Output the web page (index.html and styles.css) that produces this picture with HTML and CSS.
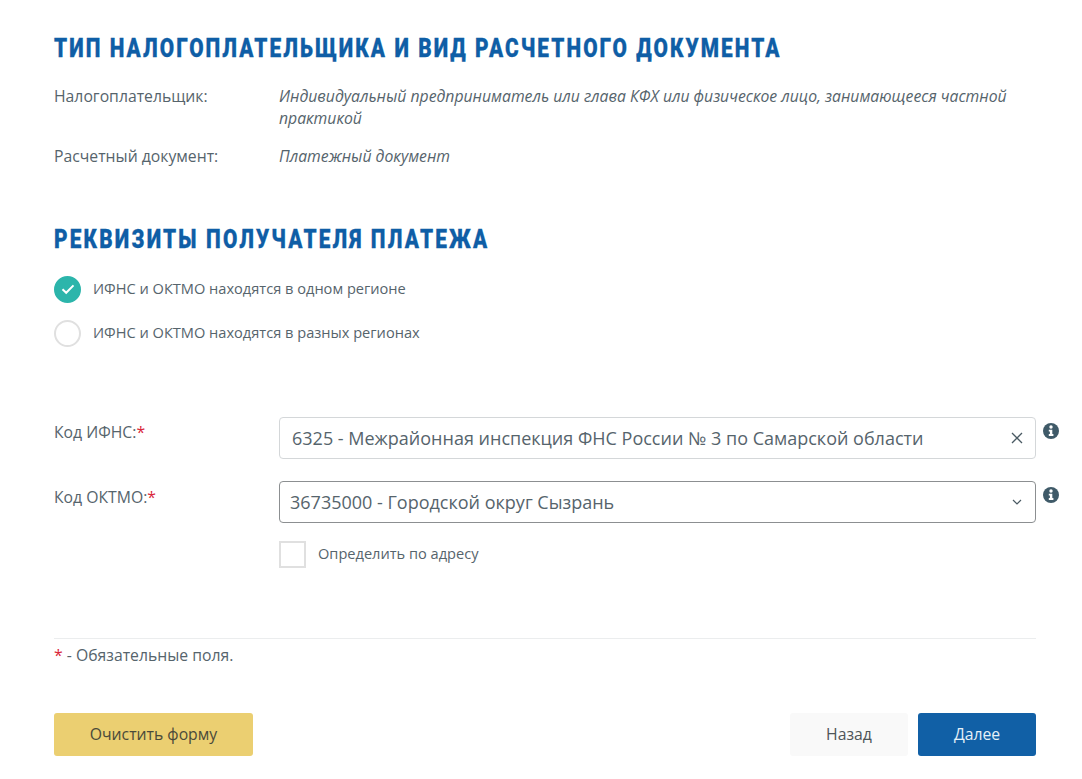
FILE: index.html
```html
<!DOCTYPE html>
<html>
  <head>
    <meta charset="utf-8">
    <link rel="stylesheet" href="styles.css">
  </head>
  <body>
    <div class="page">
      <h2 class="title">Тип налогоплательщика и вид расчетного документа</h2>

      <div class="info-row">
        <div class="info-label">Налогоплательщик:</div>
        <div class="info-value">Индивидуальный предприниматель или глава КФХ или физическое лицо, занимающееся частной практикой</div>
      </div>
      <div class="info-row">
        <div class="info-label">Расчетный документ:</div>
        <div class="info-value">Платежный документ</div>
      </div>

      <h2 class="title title-second">Реквизиты получателя платежа</h2>

      <div class="radio-row">
        <span class="radio radio-on">
          <svg width="14" height="12" viewBox="0 0 14 12"><path d="M1.5 6.2 L5.2 9.8 L12.5 2.4" fill="none" stroke="#fff" stroke-width="2"/></svg>
        </span>
        <span class="radio-text">ИФНС и ОКТМО находятся в одном регионе</span>
      </div>
      <div class="radio-row">
        <span class="radio"></span>
        <span class="radio-text">ИФНС и ОКТМО находятся в разных регионах</span>
      </div>

      <div class="field-row field-first">
        <div class="field-label">Код ИФНС:<span class="req">*</span></div>
        <div class="input">
          <span class="input-text">6325 - Межрайонная инспекция ФНС России № 3 по Самарской области</span>
          <svg class="input-icon" width="12" height="12" viewBox="0 0 12 12"><path d="M1 1 L11 11 M11 1 L1 11" fill="none" stroke="#4a5a63" stroke-width="1.3"/></svg>
        </div>
        <svg class="info-icon" width="16" height="16" viewBox="0 0 16 16">
          <circle cx="8" cy="8" r="8" fill="#3f5a68"/>
          <circle cx="8" cy="4" r="1.7" fill="#fff"/>
          <path d="M5.8 6.7 H9.3 V11 H10.4 V12.9 H5.8 V11 H6.9 V8.6 H5.8 Z" fill="#fff"/>
        </svg>
      </div>

      <div class="field-row field-second">
        <div class="field-label">Код ОКТМО:<span class="req">*</span></div>
        <div class="input input-active">
          <span class="input-text">36735000 - Городской округ Сызрань</span>
          <svg class="input-icon" width="10" height="6" viewBox="0 0 10 6"><path d="M1 1 L5 5 L9 1" fill="none" stroke="#4a5a63" stroke-width="1.2"/></svg>
        </div>
        <svg class="info-icon" width="16" height="16" viewBox="0 0 16 16">
          <circle cx="8" cy="8" r="8" fill="#3f5a68"/>
          <circle cx="8" cy="4" r="1.7" fill="#fff"/>
          <path d="M5.8 6.7 H9.3 V11 H10.4 V12.9 H5.8 V11 H6.9 V8.6 H5.8 Z" fill="#fff"/>
        </svg>
      </div>

      <div class="check-row">
        <span class="check"></span>
        <span class="check-text">Определить по адресу</span>
      </div>

      <div class="note"><span class="req">*</span> - Обязательные поля.</div>

      <div class="buttons">
        <div class="btn btn-clear">Очистить форму</div>
        <div class="buttons-right">
          <div class="btn btn-back">Назад</div>
          <div class="btn btn-next">Далее</div>
        </div>
      </div>
    </div>
  </body>
</html>
```

FILE: styles.css
```css
body {
  margin: 0;
  background-color: #fff;
  font-family: "Open Sans", sans-serif;
  color: #56646c;
}

.page {
  width: 982px;
  margin-left: 54px;
  padding-top: 31px;
}

/* no condensed face installed, so Roboto is squeezed */
.title {
  margin: 0;
  font-family: "Roboto", sans-serif;
  font-size: 26px;
  line-height: 34px;
  font-weight: 900;
  letter-spacing: 2.6px;
  -webkit-text-stroke: 0.3px #0f5ea6;
  text-transform: uppercase;
  white-space: nowrap;
  color: #0f5ea6;
  transform: scaleX(0.8);
  transform-origin: left center;
}

.title-second {
  margin-top: 55px;
  letter-spacing: 2.74px;
}

.info-row {
  display: flex;
  font-size: 15.75px;
  line-height: 22px;
  margin-top: 16px;
}

.title + .info-row {
  margin-top: 20px;
}

.info-label {
  width: 225px;
  flex-shrink: 0;
}

.info-value {
  width: 740px;
  font-style: italic;
}

.radio-row {
  display: flex;
  align-items: center;
  height: 28px;
  margin-top: 16px;
}

.title + .radio-row {
  margin-top: 19px;
}

.radio {
  display: flex;
  align-items: center;
  justify-content: center;
  box-sizing: border-box;
  width: 27px;
  height: 27px;
  border: 2px solid #e0e0e0;
  border-radius: 50%;
  margin-right: 12px;
}

.radio-on {
  background-color: #2cb5ab;
  border-color: #2cb5ab;
}

.radio-text {
  font-size: 14.6px;
  position: relative;
  top: -1px;
}

.field-row {
  display: flex;
  align-items: flex-start;
  position: relative;
}

.field-first {
  margin-top: 70px;
}

.field-second {
  margin-top: 22px;
}

.field-label {
  width: 225px;
  flex-shrink: 0;
  font-size: 15.75px;
  line-height: 22px;
  padding-top: 4px;
}

.field-second .field-label {
  padding-top: 5px;
}

.req {
  color: #d9263a;
}

.input {
  display: flex;
  align-items: center;
  justify-content: space-between;
  box-sizing: border-box;
  width: 757px;
  height: 42px;
  padding: 0 12px;
  border: 1px solid #d4d7d9;
  border-radius: 4px;
  font-size: 18px;
  color: #56646c;
}

.input-active {
  padding: 0 13px 0 10px;
  border-color: #8c8f91;
}

.input-icon {
  flex-shrink: 0;
}

.info-icon {
  position: absolute;
  left: 989px;
  top: 6px;
}

.check-row {
  display: flex;
  align-items: center;
  margin-top: 18px;
  margin-left: 225px;
}

.check {
  box-sizing: border-box;
  width: 27px;
  height: 27px;
  border: 2px solid #e0e0e0;
  margin-right: 12px;
}

.check-text {
  font-size: 14.6px;
  margin-bottom: 4px;
}

.note {
  margin-top: 70px;
  padding-top: 5px;
  border-top: 1px solid #ebedee;
  font-size: 15.75px;
  line-height: 22px;
}

.buttons {
  display: flex;
  justify-content: space-between;
  margin-top: 47px;
}

.buttons-right {
  display: flex;
  gap: 10px;
}

.btn {
  display: flex;
  align-items: center;
  justify-content: center;
  box-sizing: border-box;
  height: 43px;
  padding-bottom: 2px;
  border-radius: 3px;
  font-size: 15.75px;
}

.btn-clear {
  width: 199px;
  background-color: #ebcf71;
  color: #4a4a3a;
}

.btn-back {
  width: 118px;
  background-color: #f9f9f9;
  color: #4e5558;
}

.btn-next {
  width: 118px;
  background-color: #1160a6;
  color: #e6f1f8;
}
```
